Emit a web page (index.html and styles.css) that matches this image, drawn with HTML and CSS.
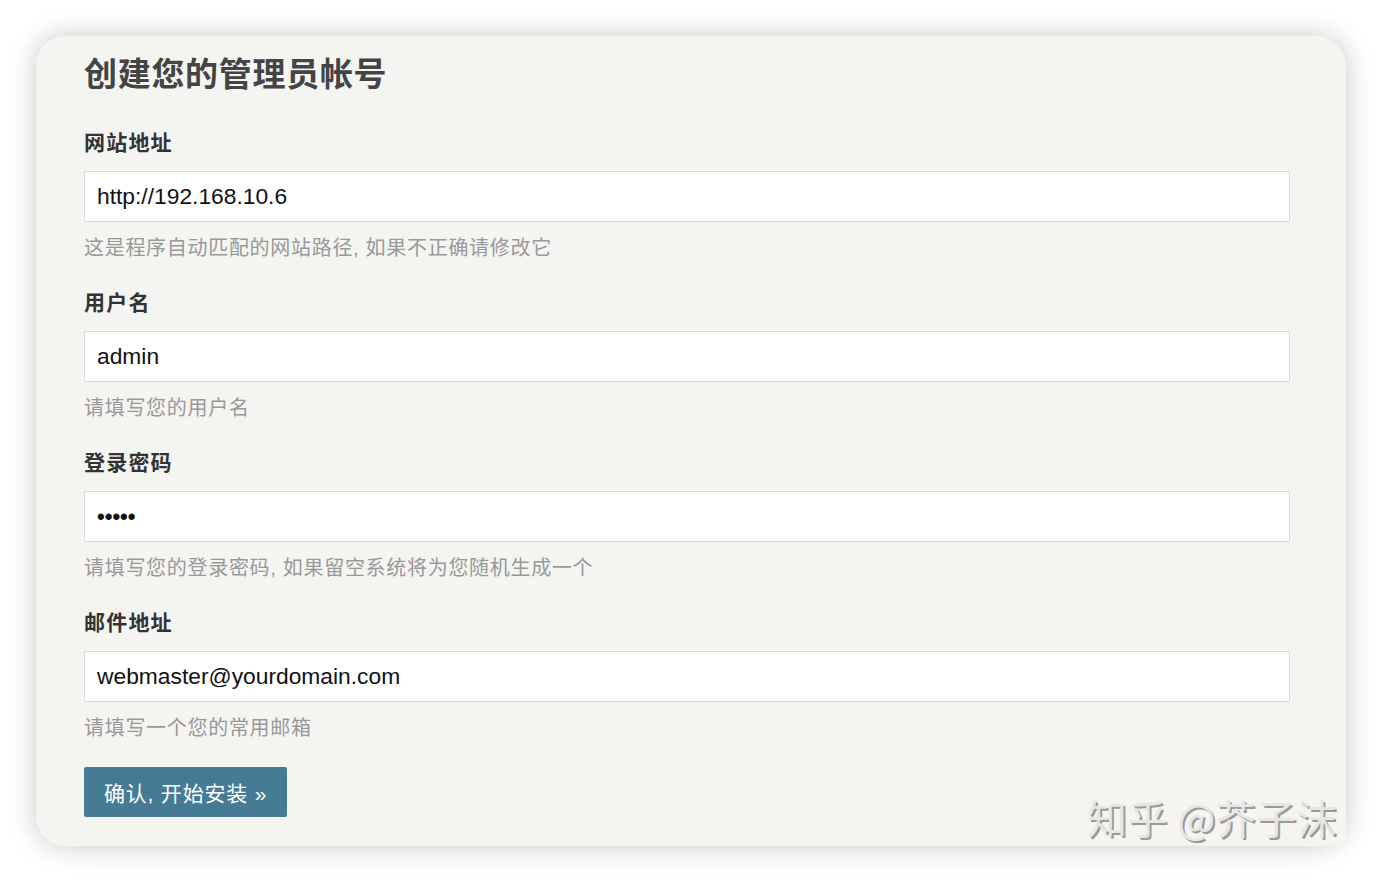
FILE: index.html
```html
<!DOCTYPE html>
<html lang="zh-CN">
<head>
    <meta charset="UTF-8">
    <title>创建您的管理员帐号</title>
    <link rel="stylesheet" href="styles.css">
</head>
<body>

    <div class="card">
        <h1 class="title">创建您的管理员帐号</h1>

        <div class="field">
            <label class="label">网站地址</label>
            <div class="input">http://192.168.10.6</div>
            <p class="help">这是程序自动匹配的网站路径, 如果不正确请修改它</p>
        </div>

        <div class="field">
            <label class="label">用户名</label>
            <div class="input">admin</div>
            <p class="help">请填写您的用户名</p>
        </div>

        <div class="field">
            <label class="label">登录密码</label>
            <div class="input dots">•••••</div>
            <p class="help">请填写您的登录密码, 如果留空系统将为您随机生成一个</p>
        </div>

        <div class="field">
            <label class="label">邮件地址</label>
            <div class="input">webmaster@yourdomain.com</div>
            <p class="help">请填写一个您的常用邮箱</p>
        </div>

        <button class="btn">确认, 开始安装 »</button>

        <div class="watermark"><span>知乎 @芥子沫</span></div>
    </div>

</body>
</html>
```

FILE: styles.css
```css
* {
    margin: 0;
    padding: 0;
    box-sizing: border-box;
}

body {
    width: 1382px;
    height: 882px;
    background-color: #ffffff;
    font-family: 'Liberation Sans', 'Noto Sans CJK SC', sans-serif;
    overflow: hidden;
    padding: 36px 36px 0 36px;
}

.card {
    position: relative;
    width: 1310px;
    height: 810px;
    background-color: #f4f4f1;
    border-radius: 30px;
    box-shadow: 0 0 28px rgba(0, 0, 0, 0.22);
    padding: 19px 56px 0 48px;
}

.title {
    font-size: 33px;
    line-height: 40px;
    font-weight: bold;
    letter-spacing: 0.7px;
    color: #444;
}

.field {
    display: flex;
    flex-direction: column;
    margin-top: 33px;
}

.field + .field {
    margin-top: 26px;
}

.label {
    font-size: 21px;
    line-height: 30px;
    font-weight: bold;
    letter-spacing: 1.2px;
    color: #333;
}

.input {
    margin-top: 13px;
    height: 51px;
    background-color: #fff;
    border: 1px solid #d9d9d6;
    border-radius: 2px;
    padding: 0 12px;
    display: flex;
    align-items: center;
    font-size: 22.8px;
    color: #111;
}

.input.dots {
    font-size: 22px;
    font-weight: bold;
}

.help {
    margin-top: 12px;
    font-size: 20px;
    line-height: 28px;
    letter-spacing: 0.7px;
    color: #999;
}

.btn {
    margin-top: 25px;
    height: 50px;
    padding: 0 20px;
    border: none;
    border-radius: 2px;
    background-color: #467b96;
    color: #fff;
    font-family: 'Liberation Sans', 'Noto Sans CJK SC', sans-serif;
    font-size: 21px;
    letter-spacing: 0.8px;
}

.watermark {
    position: absolute;
    right: 0;
    bottom: 0;
    width: 276px;
    height: 79px;
    background-color: #f5f4ef;
    padding: 24px 0 0 17px;
}

.watermark span {
    display: block;
    white-space: nowrap;
    font-family: 'Noto Sans CJK SC', sans-serif;
    font-size: 40px;
    line-height: 52px;
    letter-spacing: 0.5px;
    color: #e6e6e4;
    text-shadow: 2px 2px 0 #9a9a9a;
}
```
